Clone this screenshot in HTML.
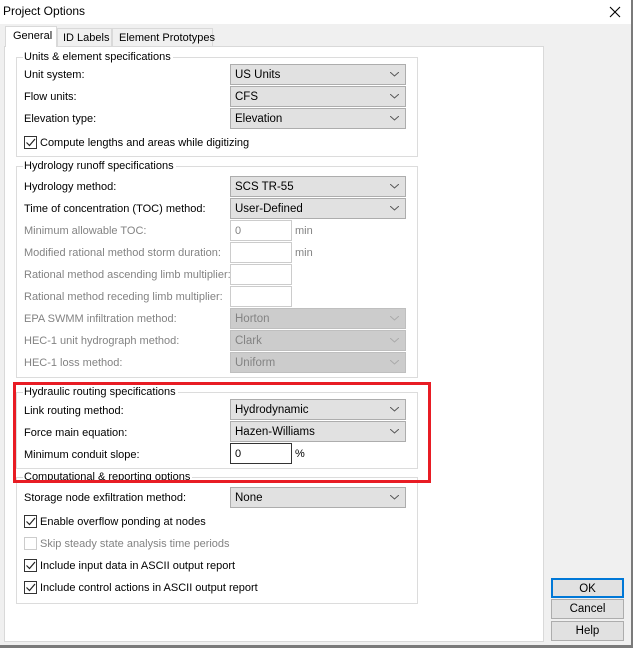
<!DOCTYPE html>
<html><head><style>
*{box-sizing:border-box;margin:0;padding:0}
body{width:633px;height:648px;background:#f0f0f0;font-family:"Liberation Sans",sans-serif;font-size:11px;line-height:15px;color:#000;position:relative;overflow:hidden}
.a{position:absolute;white-space:nowrap}
.title{left:0;top:0;width:633px;height:24px;background:#fff}
.dd{position:absolute;left:230px;width:176px;height:21px;background:#e1e1e1;border:1px solid #adadad;padding:3px 0 0 4px;font-size:11.5px}
.dd.dis{background:#cccccc;border-color:#bfbfbf;color:#838383}
.dd svg{position:absolute;right:6px;top:7px}
.tb{position:absolute;left:230px;width:62px;height:21px;background:#fff;border:1px solid #ccc;padding:3px 0 0 4px}
.lbl{position:absolute;left:24px}
.g{color:#838383}
.grp{position:absolute;left:16px;width:402px;border:1px solid #dcdcdc}
.gt{position:absolute;left:23px;background:#fff;padding:0 2px 0 1px}
.cb{position:absolute;left:24px;width:13px;height:13px;border:1px solid #333;background:#fff;line-height:0}
.cb.dis{border-color:#ccc}
.btn{position:absolute;left:551px;width:73px;height:20px;background:#e1e1e1;border:1px solid #adadad;text-align:center;padding-top:2px;font-size:11.5px}
</style></head><body>
<div class="a title"></div>
<div class="a" style="left:3px;top:4px;font-size:12px">Project Options</div>
<svg class="a" style="left:609px;top:6px" width="12" height="12"><path d="M1 1L11 11M11 1L1 11" stroke="#000" stroke-width="1.1"/></svg>
<div class="a" style="left:631px;top:0;width:2px;height:648px;background:#7a7a7a"></div>
<div class="a" style="left:0;top:645px;width:633px;height:3px;background:#7a7a7a"></div>

<div class="a" style="left:4px;top:46px;width:540px;height:596px;background:#fff;border:1px solid #d9d9d9"></div>
<div class="a" style="left:5px;top:26px;width:52px;height:21px;background:#fff;border:1px solid #d9d9d9;border-bottom:none;padding:2px 0 0 7px">General</div>
<div class="a" style="left:57px;top:28px;width:55px;height:18px;background:#f0f0f0;border:1px solid #d9d9d9;border-bottom:none;padding:2px 0 0 5px">ID Labels</div>
<div class="a" style="left:112px;top:28px;width:101px;height:18px;background:#f0f0f0;border:1px solid #d9d9d9;border-bottom:none;padding:2px 0 0 6px">Element Prototypes</div>

<div class="grp" style="top:57px;height:100px"></div>
<div class="a gt" style="top:50px">Units &amp; element specifications</div>
<div class="lbl" style="top:68px">Unit system:</div>
<div class="dd" style="top:64px">US Units<svg width="9" height="5"><path d="M0 0L4.5 4L9 0" stroke="#555" fill="none"/></svg></div>
<div class="lbl" style="top:90px">Flow units:</div>
<div class="dd" style="top:86px">CFS<svg width="9" height="5"><path d="M0 0L4.5 4L9 0" stroke="#555" fill="none"/></svg></div>
<div class="lbl" style="top:112px">Elevation type:</div>
<div class="dd" style="top:108px">Elevation<svg width="9" height="5"><path d="M0 0L4.5 4L9 0" stroke="#555" fill="none"/></svg></div>
<div class="cb" style="top:136px"><svg width="11" height="11"><path d="M1.5 5.5L4.5 8.5L10 2" stroke="#222" fill="none" stroke-width="1.2"/></svg></div>
<div class="a" style="left:40px;top:136px">Compute lengths and areas while digitizing</div>

<div class="grp" style="top:166px;height:212px"></div>
<div class="a gt" style="top:159px">Hydrology runoff specifications</div>
<div class="lbl" style="top:180px">Hydrology method:</div>
<div class="dd" style="top:176px">SCS TR-55<svg width="9" height="5"><path d="M0 0L4.5 4L9 0" stroke="#555" fill="none"/></svg></div>
<div class="lbl" style="top:202px">Time of concentration (TOC) method:</div>
<div class="dd" style="top:198px">User-Defined<svg width="9" height="5"><path d="M0 0L4.5 4L9 0" stroke="#555" fill="none"/></svg></div>
<div class="lbl g" style="top:224px">Minimum allowable TOC:</div>
<div class="tb g" style="top:220px">0</div><div class="a g" style="left:295px;top:224px">min</div>
<div class="lbl g" style="top:246px">Modified rational method storm duration:</div>
<div class="tb" style="top:242px"></div><div class="a g" style="left:295px;top:246px">min</div>
<div class="lbl g" style="top:268px">Rational method ascending limb multiplier:</div>
<div class="tb" style="top:264px"></div>
<div class="lbl g" style="top:290px">Rational method receding limb multiplier:</div>
<div class="tb" style="top:286px"></div>
<div class="lbl g" style="top:312px">EPA SWMM infiltration method:</div>
<div class="dd dis" style="top:308px">Horton<svg width="9" height="5"><path d="M0 0L4.5 4L9 0" stroke="#aaa" fill="none"/></svg></div>
<div class="lbl g" style="top:334px">HEC-1 unit hydrograph method:</div>
<div class="dd dis" style="top:330px">Clark<svg width="9" height="5"><path d="M0 0L4.5 4L9 0" stroke="#aaa" fill="none"/></svg></div>
<div class="lbl g" style="top:356px">HEC-1 loss method:</div>
<div class="dd dis" style="top:352px">Uniform<svg width="9" height="5"><path d="M0 0L4.5 4L9 0" stroke="#aaa" fill="none"/></svg></div>

<div class="grp" style="top:392px;height:77px"></div>
<div class="a gt" style="top:385px">Hydraulic routing specifications</div>
<div class="lbl" style="top:404px">Link routing method:</div>
<div class="dd" style="top:399px">Hydrodynamic<svg width="9" height="5"><path d="M0 0L4.5 4L9 0" stroke="#555" fill="none"/></svg></div>
<div class="lbl" style="top:426px">Force main equation:</div>
<div class="dd" style="top:421px">Hazen-Williams<svg width="9" height="5"><path d="M0 0L4.5 4L9 0" stroke="#555" fill="none"/></svg></div>
<div class="lbl" style="top:448px">Minimum conduit slope:</div>
<div class="tb" style="top:443px;border-color:#333">0</div><div class="a" style="left:295px;top:447px">%</div>

<div class="grp" style="top:477px;height:127px"></div>
<div class="a gt" style="top:470px">Computational &amp; reporting options</div>
<div class="lbl" style="top:491px">Storage node exfiltration method:</div>
<div class="dd" style="top:487px">None<svg width="9" height="5"><path d="M0 0L4.5 4L9 0" stroke="#555" fill="none"/></svg></div>
<div class="cb" style="top:515px"><svg width="11" height="11"><path d="M1.5 5.5L4.5 8.5L10 2" stroke="#222" fill="none" stroke-width="1.2"/></svg></div>
<div class="a" style="left:40px;top:515px">Enable overflow ponding at nodes</div>
<div class="cb dis" style="top:537px"></div>
<div class="a g" style="left:40px;top:537px">Skip steady state analysis time periods</div>
<div class="cb" style="top:559px"><svg width="11" height="11"><path d="M1.5 5.5L4.5 8.5L10 2" stroke="#222" fill="none" stroke-width="1.2"/></svg></div>
<div class="a" style="left:40px;top:559px">Include input data in ASCII output report</div>
<div class="cb" style="top:581px"><svg width="11" height="11"><path d="M1.5 5.5L4.5 8.5L10 2" stroke="#222" fill="none" stroke-width="1.2"/></svg></div>
<div class="a" style="left:40px;top:581px">Include control actions in ASCII output report</div>

<div class="a" style="left:13px;top:382px;width:418px;height:101px;border:3px solid #e81c24"></div>

<div class="btn" style="top:578px;border:2px solid #0078d7;padding-top:2px">OK</div>
<div class="btn" style="top:599px">Cancel</div>
<div class="btn" style="top:621px">Help</div>
</body></html>
